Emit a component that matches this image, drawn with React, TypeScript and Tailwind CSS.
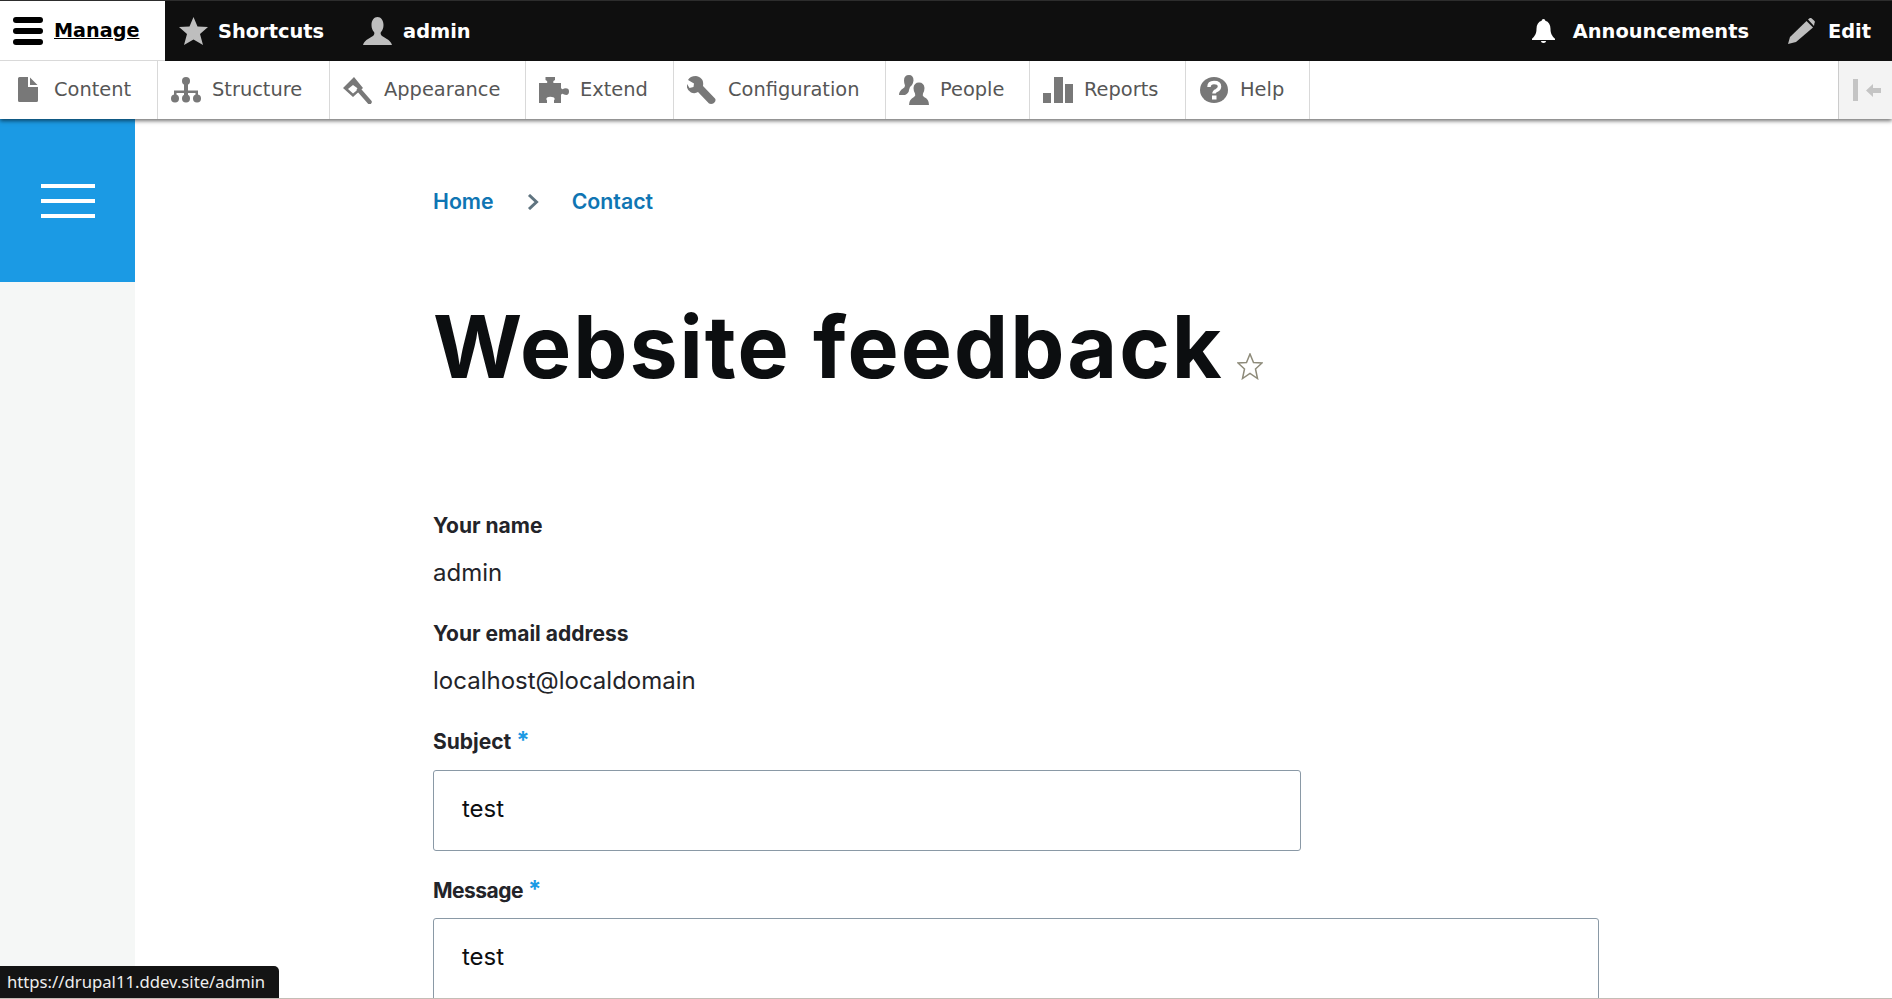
const toolbarFont = "font-['DejaVu_Sans',sans-serif]";

const ContentIcon = () => (
	<svg width="20" height="25" viewBox="0 0 20 25" fill="#787878">
		<path d="M0 1.500Q0 0 1.500 0H10V10H20V23.500Q20 25 18.500 25H1.500Q0 25 0 23.500Z" />
		<path d="M12 0.500L19.500 8H12Z" />
	</svg>
);

const StructureIcon = () => (
	<svg width="30" height="26" viewBox="0 0 30 26" fill="#787878">
		<ellipse cx="15" cy="4" rx="4" ry="4" />
		<rect x="13" y="6" width="4" height="10" />
		<path d="M3 19V13.500H27V19H24.500V16H5.500V19Z" />
		<rect x="13" y="14" width="4" height="6" />
		<circle cx="4" cy="21.500" r="4" />
		<circle cx="15" cy="21.500" r="4" />
		<circle cx="26" cy="21.500" r="4" />
	</svg>
);

const AppearanceIcon = () => (
	<svg width="29" height="28" viewBox="0 0 29 28" fill="#787878">
		<path d="M11 1L20 12L10 21L0 12ZM10 9L5 13L10 17.500L15.500 13Z" fillRule="evenodd" />
		<path d="M16 14L26.500 26" fill="none" stroke="#787878" strokeWidth="4.500" strokeLinecap="round" />
	</svg>
);

const ExtendIcon = () => (
	<svg width="30" height="26" viewBox="0 0 30 26" fill="#787878">
		<path d="M0 6H7Q9 6 8 4L6.500 3V0H16V3L14.500 4Q13.500 6 15.500 6H22V11Q23 13 25 11.500Q30 10.500 30 14.500Q30 19 25 17.500Q23 16 22 18V26H15V23.500Q16.500 22 15 20.500Q11 19 8 20.500Q6.500 22 8 23.500V26H0Z" />
	</svg>
);

const ConfigIcon = () => (
	<svg width="29" height="28" viewBox="0 0 29 28" fill="#787878">
		<path d="M9 0Q3 0 1 4L7 7.500L6.500 11L2.500 12L0 8Q-1 14 4 16.500Q8 18 11 16L22 27.500Q24.500 28.500 27 27Q29.500 24.500 28 22.500L16 10Q17 4 13 1.500Q11 0 9 0Z" />
	</svg>
);

const PeopleIcon = () => (
	<svg width="30" height="30" viewBox="0 0 30 30" fill="#787878">
		<path d="M10 0Q14.500 0 14.500 5.500Q14 9 13 10Q10 12 10 15Q10 18 6 20H0Q0 16 4 13.500Q6 12.500 6 10.500Q5 8 5 5.500Q5 0 10 0Z" />
		<path d="M20 7.500Q25 7.500 25.500 13Q25.500 16 24 18.500Q23 20.500 25 22Q30 24 30 30H10Q10 24.500 15 22Q17 20.500 16 18.500Q14.500 16 14.500 13Q15 7.500 20 7.500Z" />
	</svg>
);

const ReportsIcon = () => (
	<svg width="30" height="26" viewBox="0 0 30 26" fill="#787878">
		<rect x="0" y="16" width="8" height="10" />
		<rect x="11" y="0" width="9" height="26" />
		<rect x="22" y="7" width="8" height="19" />
	</svg>
);

const HelpIcon = () => (
	<svg width="30" height="26" viewBox="0 0 30 26">
		<ellipse cx="15" cy="13" rx="14" ry="13" fill="#787878" />
		<path d="M10 10Q10 5.500 15 5.500Q20.500 5.500 20.500 9.500Q20.500 12 17.500 13.500Q15 14.500 15 16.500" fill="none" stroke="#fff" strokeWidth="3.500" />
		<rect x="13" y="18.500" width="4.500" height="4" fill="#fff" />
	</svg>
);

const trayItems = [
	{ label: "Content", icon: <ContentIcon />, cls: "w-[158px]", iconCls: "pl-[5px]" },
	{ label: "Structure", icon: <StructureIcon />, cls: "w-[172px]", iconCls: "" },
	{ label: "Appearance", icon: <AppearanceIcon />, cls: "w-[196px]", iconCls: "" },
	{ label: "Extend", icon: <ExtendIcon />, cls: "w-[148px]", iconCls: "" },
	{ label: "Configuration", icon: <ConfigIcon />, cls: "w-[212px]", iconCls: "" },
	{ label: "People", icon: <PeopleIcon />, cls: "w-[144px]", iconCls: "" },
	{ label: "Reports", icon: <ReportsIcon />, cls: "w-[156px]", iconCls: "" },
	{ label: "Help", icon: <HelpIcon />, cls: "w-[124px]", iconCls: "" },
];

const Label = ({ children, required, className }: { children: string; required?: boolean; className?: string }) => (
	<div className={`text-[21px] leading-[26px] font-bold text-[#232429] ${className ?? ""}`}>
		{children}
		{required && <span className="ml-[5px] text-[24px] leading-[20px] text-[#1b9ae4]">*</span>}
	</div>
);

export default function App() {
	return (
		<div className="relative h-[999px] overflow-hidden border-b border-[#c4bdb6] bg-white font-['Inter',sans-serif]">
			<div className={`relative z-20 flex h-[61px] items-stretch border-t border-[#2d2d2d] bg-[#0f0f0f] font-bold text-white ${toolbarFont}`}>
				<div className="flex w-[165px] items-center border-b border-[#d9d9d9] bg-white pl-[13px] text-black">
					<div className="flex h-[28px] w-[30px] flex-col justify-between">
						<div className="h-[6px] rounded-full bg-black" />
						<div className="h-[6px] rounded-full bg-black" />
						<div className="h-[6px] rounded-full bg-black" />
					</div>
					<span className="ml-[11px] mt-[1px] text-[19.2px] underline">Manage</span>
				</div>
				<div className="ml-[14px] flex items-center">
					<svg width="29" height="28" viewBox="0 0 29 28" fill="#bebebe">
						<polygon points="14.500,0 18.500,9.500 29,10 21,17 24,28 14.500,22.500 5,28 8,17 0,10 10.500,9.500" />
					</svg>
					<span className="ml-[10px] mt-[1px] text-[19.4px]">Shortcuts</span>
				</div>
				<div className="ml-[39px] flex items-center">
					<svg width="29" height="28" viewBox="0 0 29 28" fill="#bebebe">
						<path d="M14.500 0C18 0 20.500 3.500 20.500 8C20.500 11 19.500 13.500 18 15C17.400 15.600 17.500 17.500 18.500 18.500C20.500 20.500 27.500 22.500 29 28H0C1.500 22.500 8.500 20.500 10.500 18.500C11.500 17.500 11.600 15.600 11 15C9.500 13.500 8.500 11 8.500 8C8.500 3.500 11 0 14.500 0Z" />
					</svg>
					<span className="ml-[11px] mt-[1px] text-[19.4px]">admin</span>
				</div>
				<div className="ml-auto flex items-center">
					<svg width="23" height="24" viewBox="0 0 23 24" fill="#fff">
						<path d="M11.500 0C12.500 0 13.300 0.800 13.300 1.800C16.800 2.800 18.500 5.800 18.500 9.800C18.500 14.800 20 16.800 23 19.800V21H0V19.800C3 16.800 4.500 14.800 4.500 9.800C4.500 5.800 6.200 2.800 9.700 1.800C9.700 0.800 10.500 0 11.500 0Z" />
						<path d="M9 22H14C14 23.200 12.900 24 11.500 24C10.100 24 9 23.200 9 22Z" />
					</svg>
					<span className="ml-[18px] mt-[1px] text-[19.4px]">Announcements</span>
					<svg className="ml-[39px]" width="27" height="26" viewBox="0 0 27 26" fill="#bebebe">
						<path d="M0 26L2 19L18.500 3L25 9.500L8 24Z" />
						<path d="M20 1.500L21.500 0.300Q22.500 -0.400 23.500 0.300L26.500 3Q27.300 4 26.500 5L26 8Z" />
					</svg>
					<span className="ml-[13px] mr-[21px] mt-[1px] text-[19.4px]">Edit</span>
				</div>
			</div>
			<div className={`relative z-10 flex h-[58px] bg-white text-[19.4px] text-[#565656] shadow-[0_2px_4px_rgba(0,0,0,0.55)] ${toolbarFont}`}>
				{trayItems.map((item) => (
					<div key={item.label} className={`flex items-center border-r border-[#d9d9d9] pb-[1px] pl-[13px] ${item.cls}`}>
						<div className={`flex w-[30px] shrink-0 items-center ${item.iconCls}`}>{item.icon}</div>
						<span className="ml-[11px]">{item.label}</span>
					</div>
				))}
				<div className="ml-auto flex w-[54px] items-center border-l border-[#cccccc] bg-[#f3f3f3] pl-[14px]">
					<div className="h-[22px] w-[5px] bg-[#c4c4c4]" />
					<svg className="ml-[8px]" width="15" height="13" viewBox="0 0 15 13" fill="#c4c4c4">
						<path d="M0 6.500L7 0V4H15V9H7V13Z" />
					</svg>
				</div>
			</div>
			<div className="flex">
				<div className="h-[880px] w-[135px] shrink-0 bg-[#f5f7f6]">
					<div className="flex h-[163px] flex-col items-center justify-center gap-[11px] bg-[#1b9ae4]">
						<div className="h-[4px] w-[54px] bg-white" />
						<div className="h-[4px] w-[54px] bg-white" />
						<div className="h-[4px] w-[54px] bg-white" />
					</div>
				</div>
				<div className="flex-1 pl-[298px] pt-[70px]">
					<div className="flex h-[26px] items-center text-[21.3px] font-semibold text-[#0f75b3]">
						<span>Home</span>
						<svg className="ml-[33px]" width="12" height="16" viewBox="0 0 12 16" fill="none" stroke="#5f7480" strokeWidth="3">
							<path d="M2 1L9.500 8L2 15" />
						</svg>
						<span className="ml-[33px]">Contact</span>
					</div>
					<div className="mt-[82px] flex h-[100px] items-end">
						<h1 className="text-[86px] leading-[100px] font-bold tracking-[2px] text-[#0c0e10]">Website feedback</h1>
						<svg className="mb-[17px] ml-[13px] shrink-0" width="26" height="27" viewBox="0 0 26 27" fill="none" stroke="#8e8b7a" strokeWidth="1.500">
							<polygon points="13,1 16.500,9.500 25,10 18.500,16 20.500,25.500 13,20.500 5.500,25.500 7.500,16 1,10 9.500,9.500" />
						</svg>
					</div>
					<div className="mt-[116px]">
						<Label>Your name</Label>
						<div className="mt-[16px] h-[36px] text-[24px] leading-[36px] text-[#232429]">admin</div>
					</div>
					<div className="mt-[30px]">
						<Label>Your email address</Label>
						<div className="mt-[16px] h-[36px] text-[24px] leading-[36px] text-[#232429]">localhost@localdomain</div>
					</div>
					<div className="mt-[30px]">
						<Label required>Subject</Label>
						<div className="mt-[15px] flex h-[81px] w-[868px] items-center rounded-[3px] border border-[#8a99a6] pb-[3px] pl-[28px] text-[24px] text-[#0c0e10]">test</div>
					</div>
					<div className="mt-[27px]">
						<Label required className="tracking-[-0.5px]">Message</Label>
						<div className="mt-[14px] h-[200px] w-[1166px] rounded-[3px] border border-[#8a99a6] pl-[28px] pt-[23px] text-[24px] leading-[30px] text-[#0c0e10]">test</div>
					</div>
				</div>
			</div>
			<div className="absolute bottom-0 left-0 z-30 flex h-[32px] w-[279px] items-center rounded-tr-[5px] bg-[#141414] pl-[7px] font-['Noto_Sans',sans-serif] text-[16.7px] text-[#eeeeee]">
				https://drupal11.ddev.site/admin
			</div>
		</div>
	);
}
